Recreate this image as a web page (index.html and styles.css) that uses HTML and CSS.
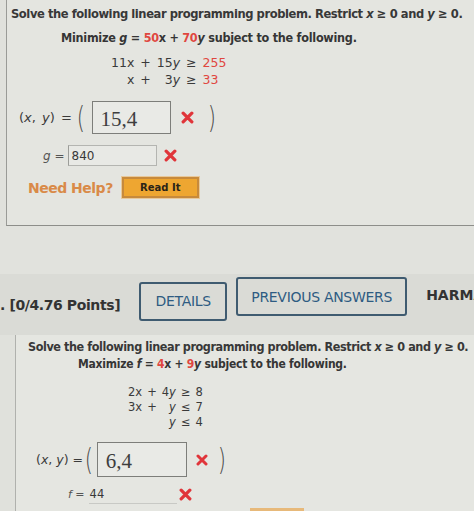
FILE: index.html
```html
<!DOCTYPE html>
<html>
<head>
<meta charset="utf-8">
<link rel="stylesheet" href="styles.css">
</head>
<body>
<div class="page">
  <section class="q q1">
    <p class="intro">Solve the following linear programming problem. Restrict <i>x</i> ≥ 0 and <i>y</i> ≥ 0.</p>
    <p class="obj">Minimize <i>g</i> = <span class="red">50</span>x + <span class="red">70</span><i>y</i> subject to the following.</p>
    <div class="cons c1">
      <span>11x</span><span>+</span><span>15<i>y</i></span><span>≥</span><span class="red">255</span>
      <span>x</span><span>+</span><span>3<i>y</i></span><span>≥</span><span class="red">33</span>
    </div>
    <div class="ans a1">
      <span class="lbl">(<i>x</i>, <i>y</i>) =</span>
      <span class="paren">(</span>
      <span class="box">15,4</span>
      <svg class="xmark" viewBox="0 0 12 12"><path d="M2 2L10 10M10 2L2 10"/></svg>
      <span class="paren cl">)</span>
    </div>
    <div class="val v1">
      <span class="lbl"><i>g</i> =</span>
      <span class="field">840</span>
      <svg class="xmark" viewBox="0 0 12 12"><path d="M2 2L10 10M10 2L2 10"/></svg>
    </div>
    <div class="help">
      <span class="need">Need Help?</span>
      <span class="readit">Read It</span>
    </div>
  </section>

  <div class="gap"></div>

  <header class="bar">
    <span class="pts">. [0/4.76 Points]</span>
    <span class="btn b-details">DETAILS</span>
    <span class="btn b-prev">PREVIOUS ANSWERS</span>
    <span class="harma">HARMA</span>
  </header>

  <section class="q q2">
    <p class="intro">Solve the following linear programming problem. Restrict <i>x</i> ≥ 0 and <i>y</i> ≥ 0.</p>
    <p class="obj">Maximize <i>f</i> = <span class="red">4</span>x + <span class="red">9</span><i>y</i> subject to the following.</p>
    <div class="cons c2">
      <span>2x</span><span>+</span><span>4<i>y</i></span><span>≥</span><span>8</span>
      <span>3x</span><span>+</span><span><i>y</i></span><span>≤</span><span>7</span>
      <span></span><span></span><span><i>y</i></span><span>≤</span><span>4</span>
    </div>
    <div class="ans a2">
      <span class="lbl">(<i>x</i>, <i>y</i>) =</span>
      <span class="paren">(</span>
      <span class="box">6,4</span>
      <svg class="xmark" viewBox="0 0 12 12"><path d="M2 2L10 10M10 2L2 10"/></svg>
      <span class="paren cl">)</span>
    </div>
    <div class="val v2">
      <span class="lbl"><i>f</i> =</span>
      <span class="field">44</span>
      <svg class="xmark" viewBox="0 0 12 12"><path d="M2 2L10 10M10 2L2 10"/></svg>
    </div>
    <div class="help2"><span class="stub"></span></div>
  </section>
</div>
</body>
</html>
```
FILE: styles.css
```css
html, body {
  margin: 0;
  padding: 0;
}
body {
  background: #e0e1dc;
  font-family: "DejaVu Sans", Verdana, sans-serif;
  color: #353535;
  width: 474px;
  height: 511px;
  overflow: hidden;
}
.page {
  display: flex;
  flex-direction: column;
}
p { margin: 0; }
.red { color: #e0473f; }

.q1 {
  margin-left: 6px;
  border-left: 1px solid #9a9b97;
  border-bottom: 1px solid #8d8e8a;
  background: #e4e5e0;
  padding: 6px 0 27px 4px;
  display: flex;
  flex-direction: column;
}
.intro {
  font-family: "DejaVu Sans Condensed", "DejaVu Sans", sans-serif;
  font-size: 12.8px;
  font-weight: 600;
  letter-spacing: -0.42px;
  color: #383838;
  white-space: nowrap;
}
.obj {
  font-family: "DejaVu Sans Condensed", "DejaVu Sans", sans-serif;
  font-size: 12.5px;
  font-weight: 600;
  margin-top: 9px;
  margin-left: 50px;
  white-space: nowrap;
  letter-spacing: -0.25px;
}
.cons {
  display: grid;
  grid-template-columns: auto auto auto auto auto;
  justify-content: start;
  column-gap: 6px;
  font-size: 12.5px;
  color: #3a3a3a;
}
.cons span { text-align: right; }
.cons span:nth-child(5n) { text-align: left; }
.c1 {
  margin-left: 100px;
  margin-top: 10px;
  row-gap: 2px;
}
.ans {
  display: flex;
  align-items: center;
  font-size: 13px;
}
.ans .lbl { color: #3a3a3a; word-spacing: 2px; }
.paren {
  font-family: "DejaVu Sans", sans-serif;
  font-weight: 200;
  font-size: 30px;
  line-height: 30px;
  color: #4a4a4a;
  margin-left: 3px;
  transform: scaleX(0.7);
}
.box {
  flex-shrink: 0;
  border: 1px solid #7d7e7a;
  background: #e9eae6;
  font-family: "Liberation Serif", "Times New Roman", serif;
  font-size: 21px;
  color: #3e3e3e;
  box-sizing: border-box;
  padding: 3px 0 0 8px;
  display: flex;
  align-items: center;
}
.xmark {
  flex-shrink: 0;
  width: 13px;
  height: 13px;
  margin-left: 12px;
  fill: none;
  stroke: #e0353a;
  stroke-width: 3;
  stroke-linecap: round;
}
.a1 { margin-top: 14px; margin-left: 8px; }
.a1 .box { width: 79px; height: 33px; margin-left: 5px; }
.a1 .xmark { margin-left: 10px; }
.a1 .paren.cl { margin-left: 12px; }

.val {
  display: flex;
  align-items: center;
  font-size: 12px;
}
.field {
  flex-shrink: 0;
  box-sizing: border-box;
  border: 1px solid #b4b5b1;
  border-left-color: #9c9d99;
  background: #e8e9e5;
  font-size: 12px;
  padding-left: 3px;
  display: flex;
  align-items: center;
  color: #383838;
}
.v1 { margin-top: 11px; margin-left: 32px; }
.v1 .lbl { color: #555; }
.v1 .field { width: 89px; height: 21px; margin-left: 3px; }
.v1 .xmark { margin-left: 7px; }

.help {
  display: flex;
  align-items: center;
  margin-top: 11px;
  margin-left: 17px;
}
.need {
  font-family: "DejaVu Sans", sans-serif;
  font-weight: bold;
  font-size: 14px;
  letter-spacing: -0.5px;
  color: #d98a48;
}
.readit {
  margin-left: 9px;
  width: 77px;
  height: 21px;
  box-sizing: border-box;
  background: #eea631;
  border: 2px solid #c78a3c;
  outline: 1px solid #e8c89a;
  font-size: 10px;
  font-weight: bold;
  color: #2a2418;
  display: flex;
  justify-content: center;
  align-items: center;
}

.gap { height: 48px; background: #e1e2dd; }

.bar {
  height: 48px;
  padding-bottom: 13px;
  background: #dadbd6;
  display: flex;
  align-items: center;
  white-space: nowrap;
}
.pts {
  flex-shrink: 0;
  font-weight: bold;
  font-size: 14px;
  letter-spacing: -0.4px;
  color: #333;
  margin-top: 14px;
}
.btn {
  flex-shrink: 0;
  box-sizing: border-box;
  border: 2px solid #3f5b70;
  border-radius: 3px;
  height: 39px;
  display: flex;
  align-items: center;
  justify-content: center;
  font-size: 14px;
  color: #2e5b82;
  letter-spacing: -0.3px;
}
.b-details { width: 88px; margin-left: 19px; margin-top: 6px; }
.b-prev { width: 171px; margin-left: 9px; margin-top: -3px; }
.harma {
  flex-shrink: 0;
  font-weight: bold;
  font-size: 14px;
  color: #333;
  margin-left: 19px;
  margin-top: -6px;
}

.q2 {
  margin-left: 15px;
  border-left: 1px solid #b0b1ad;
  background: #e5e6e1;
  padding: 4px 0 0 12px;
  display: flex;
  flex-direction: column;
  flex: 1;
  height: 180px;
}
.q2 .intro { font-size: 12.5px; }
.q2 .obj { margin-top: 3px; margin-left: 50px; font-size: 12px; font-weight: 600; }
.c2 {
  margin-left: 100px;
  margin-top: 14px;
  font-size: 11.5px;
  row-gap: 1px;
  column-gap: 5px;
}
.a2 { margin-top: 13px; margin-left: 8px; font-size: 12.5px; }
.a2 .lbl { word-spacing: 0; }
.a2 .paren { margin-left: 0; }
.a2 .box { width: 90px; height: 35px; margin-left: 2px; }
.a2 .xmark { margin-left: 9px; width: 12px; height: 12px; }
.a2 .paren.cl { margin-left: 8px; }

.v2 { margin-top: 7px; margin-left: 40px; }
.v2 .lbl { color: #555; font-size: 11px; }
.v2 .field {
  width: 88px; height: 20px; margin-left: 4px;
  padding-left: 1px;
  border: none; border-bottom: 1px solid #c8c9c5;
  background: transparent; font-size: 11.5px;
}
.v2 .xmark { margin-left: 2px; }
.help2 { position: relative; height: 10px; }
.stub {
  position: absolute;
  left: 222px;
  top: 4px;
  width: 54px;
  height: 6px;
  background: #e7b97a;
}
```
